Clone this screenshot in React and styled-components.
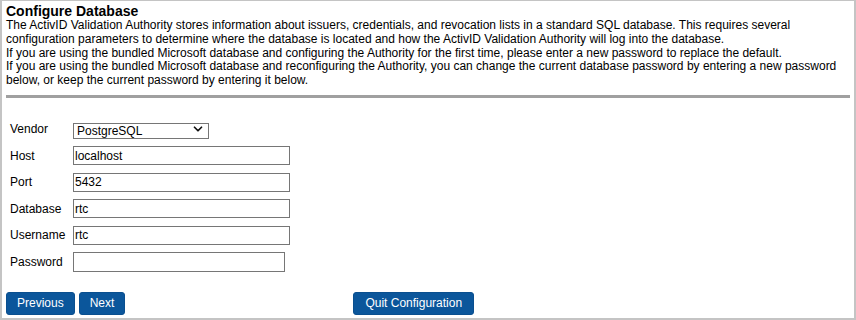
import styled, { createGlobalStyle } from 'styled-components';
import { ChevronDown } from 'lucide-react';

const GlobalStyle = createGlobalStyle`
  body {
    margin: 0;
    background: #fff;
    font-family: "Liberation Sans", Arial, sans-serif;
  }
`;

const fields = [
  { label: 'Host', value: 'localhost' },
  { label: 'Port', value: '5432' },
  { label: 'Database', value: 'rtc' },
  { label: 'Username', value: 'rtc' },
];

const App = () => {
  return (
    <>
      <GlobalStyle />
      <Frame>
        <Header>
          <Title>Configure Database</Title>
          <Intro>
            The ActivID Validation Authority stores information about issuers, credentials, and revocation lists in a
            standard SQL database. This requires several configuration parameters to determine where the database is
            located and how the ActivID Validation Authority will log into the database.
            <br />
            If you are using the bundled Microsoft database and configuring the Authority for the first time, please
            enter a new password to replace the default.
            <br />
            If you are using the bundled Microsoft database and reconfiguring the Authority, you can change the current
            database password by entering a new password below, or keep the current password by entering it below.
          </Intro>
        </Header>
        <Separator />
        <Form>
          <Label>Vendor</Label>
          <SelectWrap>
            <Select defaultValue="postgres">
              <option value="postgres">PostgreSQL</option>
              <option value="mssql">Microsoft SQL Server</option>
              <option value="oracle">Oracle</option>
            </Select>
            <Chevron>
              <ChevronDown size={14} strokeWidth={3} />
            </Chevron>
          </SelectWrap>
          {fields.map((f) => (
            <FieldRow key={f.label}>
              <Label>{f.label}</Label>
              <Input type="text" defaultValue={f.value} />
            </FieldRow>
          ))}
          <Label>Password</Label>
          <Input type="password" $password />
        </Form>
        <Actions>
          <Button>Previous</Button>
          <Button>Next</Button>
          <QuitButton>Quit Configuration</QuitButton>
        </Actions>
      </Frame>
    </>
  );
};

export default App;

const Frame = styled.div`
  width: 856px;
  height: 320px;
  box-sizing: border-box;
  border: 2px solid #c4c4c4;
  border-top-width: 1px;
  color: #000;
  display: flex;
  flex-direction: column;
`;

const Header = styled.div`
  padding: 2px 4px 0;
`;

const Title = styled.h1`
  margin: 0;
  font-size: 14px;
  font-weight: 700;
  line-height: 16px;
`;

const Intro = styled.p`
  margin: 0;
  font-size: 12px;
  line-height: 13.8px;
`;

const Separator = styled.div`
  height: 3px;
  background: #a0a0a0;
  margin: 7px 4px 0;
`;

const Form = styled.div`
  display: grid;
  grid-template-columns: 63px auto;
  grid-auto-rows: 26.5px;
  align-items: center;
  justify-items: start;
  margin: 18px 0 0 8px;
`;

const FieldRow = styled.div`
  display: contents;
`;

const Label = styled.span`
  font-size: 12px;
`;

const SelectWrap = styled.div`
  position: relative;
  width: 136px;
  height: 16px;
`;

const Select = styled.select`
  appearance: none;
  width: 100%;
  height: 100%;
  box-sizing: border-box;
  border: 1px solid #767676;
  border-radius: 0;
  background: #fff;
  padding: 0 0 0 3px;
  font-family: inherit;
  font-size: 12px;
  color: #000;
  outline: none;
`;

const Chevron = styled.span`
  position: absolute;
  right: 4px;
  top: 1px;
  display: flex;
  pointer-events: none;
  color: #111;
`;

const Input = styled.input`
  width: ${(p) => (p.$password ? '212px' : '217px')};
  height: ${(p) => (p.$password ? '20px' : '19px')};
  box-sizing: border-box;
  border: 1px solid #767676;
  padding: 0 1px;
  font-family: inherit;
  font-size: 12px;
  color: #000;
  outline: none;
`;

const Actions = styled.div`
  display: flex;
  gap: 4px;
  margin: 17px 0 0 4px;
`;

const Button = styled.button`
  height: 23px;
  padding: 0 10px;
  border: 1px solid #0a4f8f;
  border-radius: 3px;
  background: #0b569b;
  color: #fff;
  font-family: inherit;
  font-size: 12px;
  cursor: pointer;
`;

const QuitButton = styled(Button)`
  margin-left: 224px;
  padding: 0 11px;
`;
